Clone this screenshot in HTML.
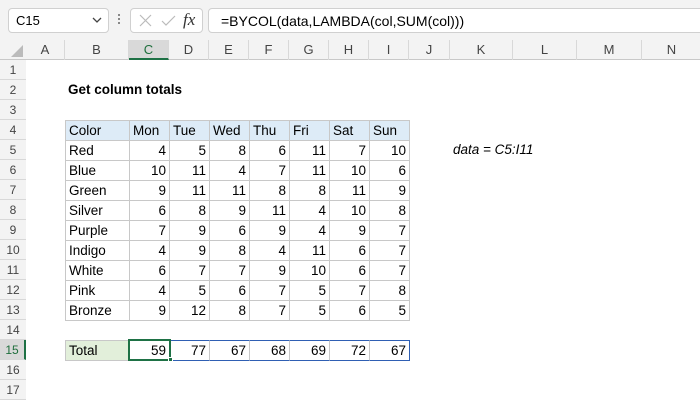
<!DOCTYPE html>
<html><head><style>
body{margin:0;width:700px;height:400px;overflow:hidden;background:#fff;font-family:"Liberation Sans",sans-serif;font-size:13.5px;color:#000;position:relative}
.a{position:absolute;box-sizing:border-box}
.ch{position:absolute;top:40px;height:20px;line-height:20px;text-align:center;color:#444;font-size:13px;border-right:1px solid #d8d8d8;box-sizing:border-box}
.rh{position:absolute;left:0;width:26px;height:20px;line-height:20px;text-align:center;color:#444;font-size:12px;border-bottom:1px solid #d8d8d8;box-sizing:border-box;background:#f3f3f3}
.c{position:absolute;height:20px;line-height:20px;box-sizing:border-box;border-right:1px solid #c8c8c8;border-bottom:1px solid #c8c8c8;padding:0 3px;white-space:nowrap}
.n{text-align:right}
</style></head><body>
<div class="a" style="left:0;top:0;width:700px;height:40px;background:#f3f3f3"></div>
<div class="a" style="left:8px;top:8px;width:101px;height:25px;background:#fff;border:1px solid #d0d0d0;border-radius:4px;padding:4px 7px;font-size:13px">C15</div>
<svg class="a" style="left:92px;top:17px" width="10" height="7"><path d="M1 1 L5 5 L9 1" stroke="#444" fill="none" stroke-width="1.3"/></svg>
<div class="a" style="left:118px;top:14px;width:2px;height:2px;background:#888;box-shadow:0 4px 0 #888,0 8px 0 #888"></div>
<div class="a" style="left:130px;top:8px;width:73px;height:25px;background:#fff;border:1px solid #d0d0d0;border-radius:4px"></div>
<svg class="a" style="left:138px;top:14px" width="40" height="14"><path d="M2 1 L13 12 M13 1 L2 12" stroke="#bbb" stroke-width="1.2"/><path d="M24 7 L28 11 L37 2" stroke="#bbb" fill="none" stroke-width="1.2"/></svg>
<div class="a" style="left:183px;top:10px;font-family:'Liberation Serif',serif;font-style:italic;font-size:17px;color:#333">fx</div>
<div class="a" style="left:208px;top:8px;width:500px;height:25px;background:#fff;border:1px solid #d0d0d0;border-radius:4px;padding:4px 12px;font-size:14px">=BYCOL(data,LAMBDA(col,SUM(col)))</div>
<div class="a" style="left:0;top:40px;width:700px;height:20px;background:#f3f3f3;border-bottom:1px solid #c8c8c8"></div>
<svg class="a" style="left:8px;top:44px" width="16" height="14"><path d="M15 1 L15 13 L3 13 Z" fill="#bbb"/></svg>
<div class="ch" style="left:26px;width:39px">A</div>
<div class="ch" style="left:65px;width:64px">B</div>
<div class="ch" style="left:129px;width:40px;background:#d9d9d9;color:#1e6e3c;border-bottom:2px solid #1e7145">C</div>
<div class="ch" style="left:169px;width:40px">D</div>
<div class="ch" style="left:209px;width:40px">E</div>
<div class="ch" style="left:249px;width:40px">F</div>
<div class="ch" style="left:289px;width:40px">G</div>
<div class="ch" style="left:329px;width:40px">H</div>
<div class="ch" style="left:369px;width:40px">I</div>
<div class="ch" style="left:409px;width:41px">J</div>
<div class="ch" style="left:450px;width:63px">K</div>
<div class="ch" style="left:513px;width:64px">L</div>
<div class="ch" style="left:577px;width:65px">M</div>
<div class="ch" style="left:642px;width:60px">N</div>
<div class="a" style="left:25px;top:60px;width:1px;height:340px;background:#c8c8c8"></div>
<div class="rh" style="top:60px">1</div><div class="rh" style="top:80px">2</div><div class="rh" style="top:100px">3</div><div class="rh" style="top:120px">4</div><div class="rh" style="top:140px">5</div><div class="rh" style="top:160px">6</div><div class="rh" style="top:180px">7</div><div class="rh" style="top:200px">8</div><div class="rh" style="top:220px">9</div><div class="rh" style="top:240px">10</div><div class="rh" style="top:260px">11</div><div class="rh" style="top:280px">12</div><div class="rh" style="top:300px">13</div><div class="rh" style="top:320px">14</div><div class="rh" style="top:340px;background:#d9d9d9;color:#1e6e3c;border-right:2px solid #1e7145">15</div><div class="rh" style="top:360px">16</div><div class="rh" style="top:380px">17</div>
<div class="a" style="left:68px;top:82px;font-weight:bold;font-size:13.5px">Get column totals</div>
<div class="a" style="left:453px;top:142px;font-style:italic">data = C5:I11</div>
<div class="a" style="left:65px;top:120px;width:345px;height:201px;border-left:1px solid #c8c8c8;border-top:1px solid #c8c8c8"></div>
<div id="t"></div>
<script>
var xs=[66,130,170,210,250,290,330,370,410];
var rows=[["Color","Mon","Tue","Wed","Thu","Fri","Sat","Sun"],
["Red",4,5,8,6,11,7,10],["Blue",10,11,4,7,11,10,6],["Green",9,11,11,8,8,11,9],["Silver",6,8,9,11,4,10,8],["Purple",7,9,6,9,4,9,7],["Indigo",4,9,8,4,11,6,7],["White",6,7,7,9,10,6,7],["Pink",4,5,6,7,5,7,8],["Bronze",9,12,8,7,5,6,5]];
var h="";
rows.forEach(function(r,i){var y=121+i*20;r.forEach(function(v,j){
var cls="c"+(i>0&&j>0?" n":"");var st="left:"+xs[j]+"px;top:"+y+"px;width:"+(xs[j+1]-xs[j])+"px;";
if(i==0)st+="background:#ddebf7;";
h+='<div class="'+cls+'" style="'+st+'">'+v+'</div>';});});
var tot=["Total",59,77,67,68,69,72,67];
tot.forEach(function(v,j){var st="left:"+xs[j]+"px;top:340px;width:"+(xs[j+1]-xs[j])+"px;height:21px;";
if(j==0)st+="background:#e2efda;border-top:1px solid #c8c8c8;";
else st+="border-top:1px solid #2f5fb3;border-bottom:1px solid #2f5fb3;"+(j==7?"border-right:1px solid #2f5fb3;":"");
h+='<div class="c'+(j?" n":"")+'" style="'+st+'">'+v+'</div>';});
document.getElementById("t").innerHTML=h;
</script>
<div class="a" style="left:65px;top:340px;width:1px;height:21px;background:#c8c8c8"></div>
<div class="a" style="left:128px;top:339px;width:43px;height:22px;border:2px solid #1e7145"></div>
<div class="a" style="left:168px;top:357px;width:5px;height:5px;background:#1e7145;border:1px solid #fff"></div>
</body></html>
